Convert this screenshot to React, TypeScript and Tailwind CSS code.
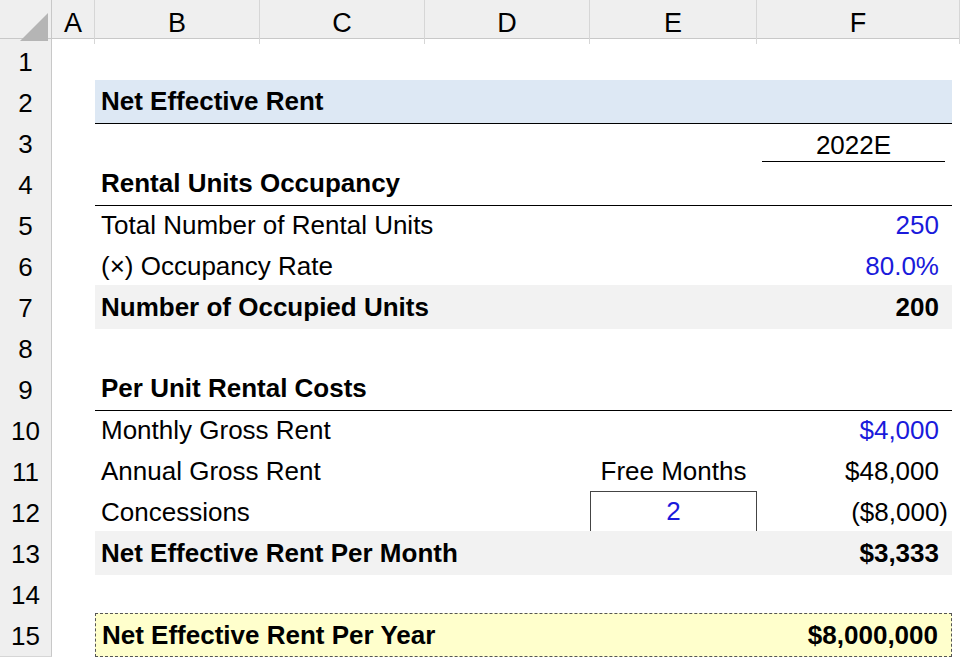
import React from "react";

const cols = "grid grid-cols-[52px_43px_165px_165px_165px_167px_1fr]";
type Row = { n: number; cls?: string; b?: string; e?: React.ReactNode; f?: React.ReactNode; fcls?: string; bold?: boolean };

const rows: Row[] = [
  { n: 1 },
  { n: 2, cls: "bg-[#dde8f4] border-b border-black", b: "Net Effective Rent", bold: true },
  { n: 3, f: <div className="ml-[5px] -mr-[6px] border-b border-black text-center h-[34px] mt-[4px] leading-[34px]">2022E</div> },
  { n: 4, cls: "border-b border-black", b: "Rental Units Occupancy", bold: true },
  { n: 5, b: "Total Number of Rental Units", f: "250", fcls: "text-[#1a1adb]" },
  { n: 6, b: "(×) Occupancy Rate", f: "80.0%", fcls: "text-[#1a1adb]" },
  { n: 7, cls: "bg-[#f2f2f2]", b: "Number of Occupied Units", f: "200", bold: true },
  { n: 8 },
  { n: 9, cls: "border-b border-black", b: "Per Unit Rental Costs", bold: true },
  { n: 10, b: "Monthly Gross Rent", f: "$4,000", fcls: "text-[#1a1adb]" },
  { n: 11, b: "Annual Gross Rent", e: <div className="text-center">Free Months</div>, f: "$48,000" },
  { n: 12, b: "Concessions", e: <div className="border border-[#444] h-[41px] -mt-px flex items-center justify-center text-[#1a1adb]">2</div>, f: <span className="mr-[-9px]">($8,000)</span> },
  { n: 13, cls: "bg-[#f2f2f2]", b: "Net Effective Rent Per Month", f: "$3,333", bold: true },
  { n: 14 },
  { n: 15, cls: "bg-[#ffffcc] border border-dashed border-[#555]", b: "Net Effective Rent Per Year", f: "$8,000,000", bold: true },
];

export default function App() {
  return (
    <div className="w-[960px] h-[658px] overflow-hidden bg-white text-[26px] text-black" style={{ fontFamily: '"Liberation Sans", Arial, sans-serif' }}>
      <div className={`${cols} h-[39px] bg-[#efefef] border-b border-[#c8c8c8]`}>
        <div className="relative border-r border-[#c8c8c8]">
          <div className="absolute right-[3px] bottom-[3px] w-0 h-0 border-l-[28px] border-l-transparent border-b-[28px] border-b-[#b5b5b5]" />
        </div>
        {["A", "B", "C", "D", "E", "F"].map((c) => (
          <div key={c} className="flex items-center justify-center border-r border-[#d6d6d6] text-[27px] pt-[3px]">{c}</div>
        ))}
      </div>
      {rows.map((r) => (
        <div key={r.n} className={`${cols} h-[41px]`}>
          <div className="bg-[#efefef] border-r border-[#c8c8c8] border-b border-b-[#d6d6d6] flex items-center justify-center pt-[4px] text-[26px]">{r.n}</div>
          <div />
          <div className={`col-span-5 mr-[8px] grid grid-cols-[330px_165px_167px_1fr] items-center ${r.cls ?? ""} ${r.bold ? "font-bold" : ""}`}>
            <div className="pl-[6px] whitespace-nowrap">{r.b}</div>
            <div />
            <div>{r.e}</div>
            <div className={`text-right pr-[13px] whitespace-nowrap ${r.fcls ?? ""}`}>{r.f}</div>
          </div>
        </div>
      ))}
    </div>
  );
}
